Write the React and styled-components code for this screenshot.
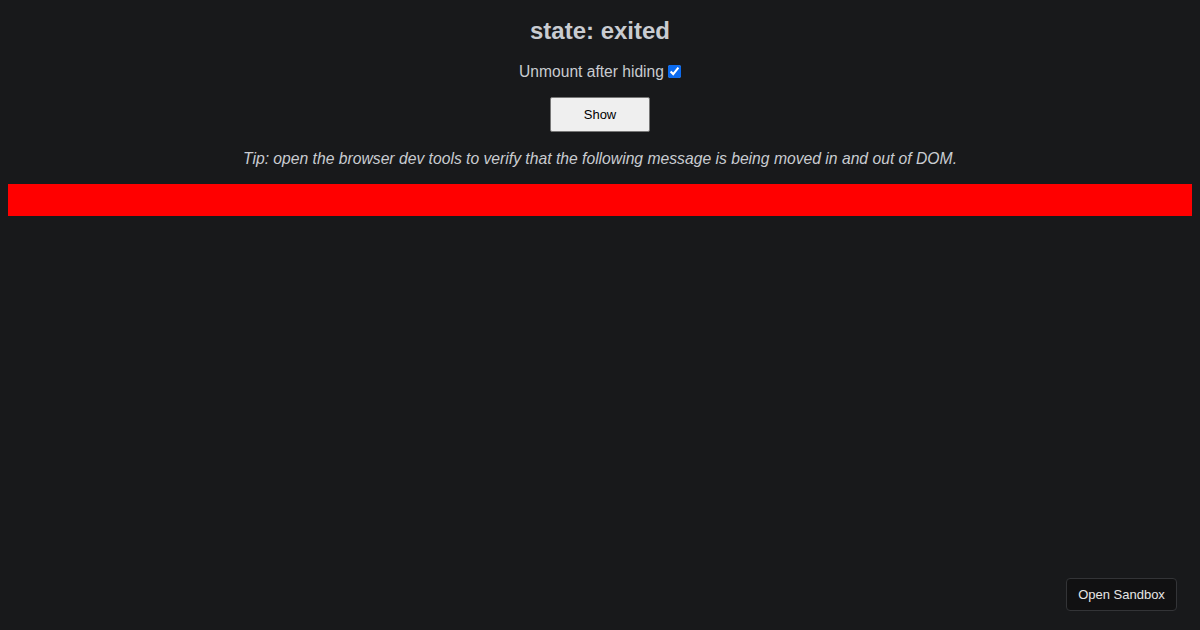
import React, { useState } from "react";
import styled, { createGlobalStyle } from "styled-components";

const Global = createGlobalStyle`
  html, body { margin: 0; padding: 0; background: #18191b; }
  body { font-family: "Liberation Sans", Arial, sans-serif; color: #c9ccd1; }
`;

const Page = styled.div`
  padding: 0 8px;
  min-height: 630px;
  box-sizing: border-box;
  display: flex;
  flex-direction: column;
  align-items: center;
  text-align: center;
`;

const Title = styled.h2`
  margin: 17px 0 0;
  font-size: 24px;
  line-height: 28px;
  font-weight: bold;
`;

const Label = styled.label`
  margin-top: 18px;
  font-size: 15.6px;
  line-height: 18px;
  display: flex;
  align-items: center;
`;

const Check = styled.input`
  margin: 0 0 2px 4px;
  width: 13px;
  height: 13px;
  accent-color: #0b6bf0;
`;

const ShowButton = styled.button`
  margin-top: 16px;
  width: 100px;
  height: 35px;
  background: #efefef;
  border: 1px solid #767676;
  border-radius: 2px;
  font-family: "Liberation Sans", Arial, sans-serif;
  font-size: 13px;
  color: #000;
  cursor: pointer;
`;

const Tip = styled.p`
  margin: 18px 0 0;
  font-size: 15.7px;
  line-height: 18px;
  font-style: italic;
`;

const Message = styled.div`
  margin-top: 16px;
  align-self: stretch;
  height: 32px;
  background: #ff0000;
`;

const SandboxButton = styled.button`
  position: fixed;
  right: 23px;
  bottom: 19px;
  width: 111px;
  height: 33px;
  background: #111112;
  color: #e6e6e6;
  border: 1px solid #333437;
  border-radius: 4px;
  font-family: "Liberation Sans", Arial, sans-serif;
  font-size: 13px;
  cursor: pointer;
`;

export default function App() {
  const [unmount, setUnmount] = useState(true);
  return (
    <>
      <Global />
      <Page>
        <Title>state: exited</Title>
        <Label>
          Unmount after hiding
          <Check type="checkbox" checked={unmount} onChange={(e) => setUnmount(e.target.checked)} />
        </Label>
        <ShowButton>Show</ShowButton>
        <Tip>
          Tip: open the browser dev tools to verify that the following message is being moved in and out of DOM.
        </Tip>
        <Message />
      </Page>
      <SandboxButton>Open Sandbox</SandboxButton>
    </>
  );
}
